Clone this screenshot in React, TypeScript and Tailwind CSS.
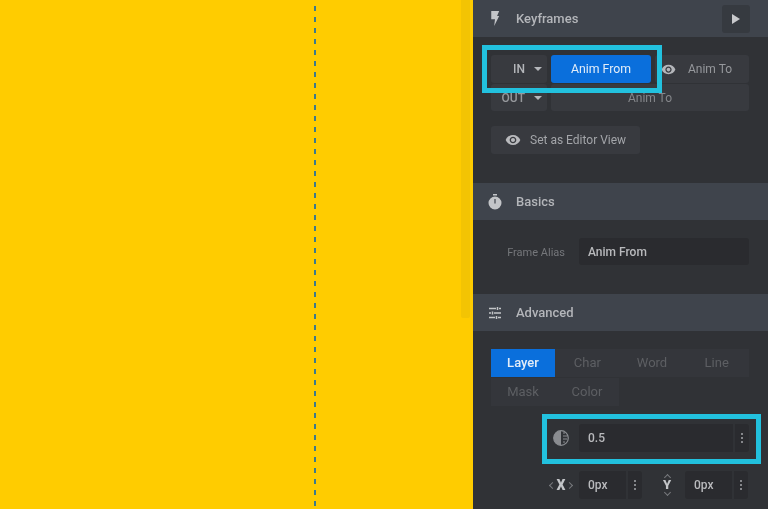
import { FC, ReactNode } from "react";

const Caret = () => <span className="ml-[9px] h-0 w-0 border-x-[4px] border-t-[4px] border-x-transparent border-t-[#b5b7bb]" />;

const Eye: FC<{ className?: string }> = ({ className }) => (
    <svg viewBox="0 0 24 24" className={className} fill="currentColor">
        <path d="M12 4.500C7 4.500 2.700 7.600 1 12c1.700 4.400 6 7.500 11 7.500s9.300-3.100 11-7.500c-1.700-4.400-6-7.500-11-7.500zM12 17c-2.800 0-5-2.200-5-5s2.200-5 5-5 5 2.200 5 5-2.200 5-5 5zm0-8c-1.700 0-3 1.300-3 3s1.300 3 3 3 3-1.300 3-3-1.300-3-3-3z" />
    </svg>
);

const Dots = () => (
    <span className="ml-[2px] flex w-[14px] shrink-0 flex-col items-center justify-center gap-[2px] self-stretch rounded-r-[3px] bg-[#2a2b2f]">
        <i className="h-[2px] w-[2px] bg-[#85878b]" />
        <i className="h-[2px] w-[2px] bg-[#85878b]" />
        <i className="h-[2px] w-[2px] bg-[#85878b]" />
    </span>
);

const Header: FC<{ icon: ReactNode; title: string; children?: ReactNode }> = ({ icon, title, children }) => (
    <div className="flex h-[37px] items-center bg-[#3f444c]">
        <span className="flex w-[43px] shrink-0 justify-center pl-[1px] text-[#c3c5c8]">{icon}</span>
        <span className="text-[13px] font-medium text-[#b4b6ba]">{title}</span>
        {children}
    </div>
);

const NumField: FC<{ value: string; className: string }> = ({ value, className }) => (
    <div className={`flex h-[28px] items-stretch text-[12px] font-medium text-[#b9babd] ${className}`}>
        <span className="flex flex-1 items-center rounded-l-[3px] bg-[#2a2b2f] pl-[9px]">{value}</span>
        <Dots />
    </div>
);

const tabs1 = ["Char", "Word", "Line"];
const tabs2 = ["Mask", "Color"];

export default function App() {
    return (
        <div className="relative flex h-[509px] w-[768px] overflow-hidden bg-[#ffcc00] font-['Roboto',sans-serif] blur-[0.4px]">
            <div className="relative h-full w-[473px] shrink-0">
                <div className="ml-[314px] h-full w-[2px] bg-[repeating-linear-gradient(to_bottom,transparent_0,transparent_6px,#3d7a8c_6px,#3d7a8c_12px,transparent_12px,transparent_11px)] bg-[length:2px_11px]" />
                <div className="absolute left-[461px] top-0 h-[318px] w-[9px] rounded-b-[2px] bg-[#f3c403]" />
            </div>

            <div className="flex w-[295px] flex-col bg-[#303236]">
                <Header
                    title="Keyframes"
                    icon={
                        <svg viewBox="0 0 12 18" className="h-[15px] w-[10px]" fill="currentColor">
                            <path d="M1.500 0h9.500L8.500 6H11L5 18l1-8H1.500z" />
                        </svg>
                    }
                >
                    <span className="ml-auto mr-[18px] flex h-[28px] w-[28px] items-center justify-center rounded-[3px] bg-[#363a40]">
                        <span className="h-0 w-0 border-y-[5px] border-l-[8px] border-y-transparent border-l-[#c8c9cc]" />
                    </span>
                </Header>

                <div className="flex h-[146px] flex-col bg-[#303236] pl-[18px] pt-[18px] text-[12px]">
                    <div className="flex gap-[4px]">
                        <div className="flex h-[28px] w-[56px] items-center justify-end rounded-[3px] bg-[#383a3f] pr-[5px] font-medium text-[#b4b6ba]">
                            IN
                            <Caret />
                        </div>
                        <div className="flex h-[28px] w-[100px] items-center justify-center rounded-[3px] bg-[#0a6fdc] text-[12.300px] text-[#e3edf8]">Anim From</div>
                        <div className="flex h-[28px] w-[94px] items-center rounded-[3px] bg-[#383a3f] text-[#96989c]">
                            <Eye className="ml-[6px] h-[15px] w-[15px] text-[#b4b6ba]" />
                            <span className="ml-[12px]">Anim To</span>
                        </div>
                    </div>
                    <div className="mt-[1px] flex gap-[4px]">
                        <div className="flex h-[27px] w-[56px] items-center justify-end rounded-[3px] bg-[#383a3f] pr-[5px] font-medium text-[#96989c]">
                            OUT
                            <Caret />
                        </div>
                        <div className="flex h-[27px] w-[198px] items-center justify-center rounded-[3px] bg-[#383a3f] text-[#85878b]">Anim To</div>
                    </div>
                    <div className="mt-[15px] flex h-[28px] w-[149px] items-center rounded-[3px] bg-[#383a3f] text-[#a3a5a9]">
                        <Eye className="ml-[14px] h-[16px] w-[16px] text-[#b9babd]" />
                        <span className="ml-[9px]">Set as Editor View</span>
                    </div>
                </div>

                <Header
                    title="Basics"
                    icon={
                        <svg viewBox="0 0 14 16" className="h-[16px] w-[14px]" fill="currentColor">
                            <path d="M5 0h4v1.500H5zM7 2.500a6.500 6.500 0 1 0 0 13 6.500 6.500 0 0 0 0-13zM6.400 5h1.200v4.500H6.400z" fillRule="evenodd" />
                        </svg>
                    }
                />

                <div className="flex h-[74px] items-start bg-[#303236] pt-[18px]">
                    <span className="w-[92px] pt-[7px] text-right text-[11px] text-[#75777b]">Frame Alias</span>
                    <div className="ml-[14px] flex h-[27px] w-[170px] items-center rounded-[3px] bg-[#2a2b2f] pl-[9px] text-[12px] font-medium text-[#b9babd]">Anim From</div>
                </div>

                <Header
                    title="Advanced"
                    icon={
                        <svg viewBox="0 0 14 14" className="h-[14px] w-[14px]" fill="none" stroke="currentColor" strokeWidth="1.500">
                            <path d="M1 2.500h7M11 2.500h2M1 7h2M6 7h7M1 11.500h6M10 11.500h3M9.500 1v3M4.500 5.500v3M8.500 10v3" />
                        </svg>
                    }
                />

                <div className="flex-1 bg-[#303236] pl-[18px] pt-[18px]">
                    <div className="flex h-[28px] w-[258px] text-[13px]">
                        <div className="flex w-[64px] items-center justify-center bg-[#0a6fdc] font-medium text-[#e3edf8]">Layer</div>
                        {tabs1.map((t) => (
                            <div key={t} className="flex flex-1 items-center justify-center bg-[#34363b] text-[#5d5f63]">{t}</div>
                        ))}
                    </div>
                    <div className="mt-[1px] flex h-[28px] text-[13px]">
                        {tabs2.map((t) => (
                            <div key={t} className="flex w-[64px] items-center justify-center bg-[#34363b] text-[#5d5f63]">{t}</div>
                        ))}
                    </div>
                    <div className="mt-[18px] flex items-center">
                        <svg viewBox="0 0 16 16" className="ml-[62px] h-[16px] w-[16px]">
                            <circle cx="8" cy="8" r="7.300" fill="none" stroke="#8a8c90" strokeWidth="1.200" />
                            <path d="M8 .7a7.300 7.300 0 0 0 0 14.600z" fill="#8a8c90" />
                            <path d="M10 3h2M10 6h4M10 9h4M10 12h2" stroke="#8a8c90" strokeWidth="1" />
                        </svg>
                        <NumField value="0.5" className="ml-[10px] w-[170px]" />
                    </div>
                    <div className="mt-[19px] flex items-center">
                        <span className="ml-[58px] flex w-[24px] items-center justify-center gap-[2px] text-[14px] font-black text-[#c3c5c8]">
                            <i className="h-[5px] w-[5px] rotate-45 border-b border-l border-[#77797d]" />
                            X
                            <i className="h-[5px] w-[5px] rotate-45 border-r border-t border-[#77797d]" />
                        </span>
                        <NumField value="0px" className="ml-[6px] w-[63px]" />
                        <span className="ml-[20px] flex w-[10px] flex-col items-center text-[13px] font-black leading-[12px] text-[#c3c5c8]">
                            <i className="h-[5px] w-[5px] translate-y-[1px] rotate-45 border-l border-t border-[#77797d]" />
                            Y
                            <i className="h-[5px] w-[5px] -translate-y-[1px] rotate-45 border-b border-r border-[#77797d]" />
                        </span>
                        <NumField value="0px" className="ml-[13px] w-[63px]" />
                    </div>
                </div>
            </div>

            <div className="absolute left-[482px] top-[45px] h-[48px] w-[180px] border-[5px] border-[#22c1de]" />
            <div className="absolute left-[542px] top-[414px] h-[50px] w-[219px] border-[5px] border-[#22c1de]" />
        </div>
    );
}
